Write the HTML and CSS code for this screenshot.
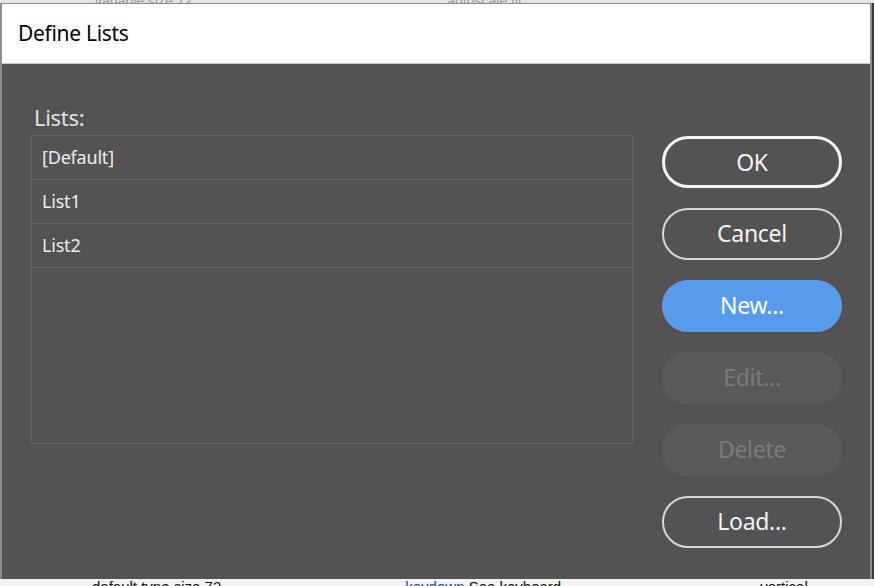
FILE: index.html
```
<!DOCTYPE html>
<html>
<head>
<meta charset="utf-8">
<link rel="stylesheet" href="styles.css">
</head>
<body>
<div class="page">
  <div class="bg-top"><span class="t1">variable size 72</span><span class="t2">autoscale fit</span></div>
  <div class="row">
    <div class="dialog">
      <div class="titlebar">Define Lists</div>
      <div class="content">
        <div class="left">
          <div class="label">Lists:</div>
          <div class="listbox">
            <div class="item">[Default]</div>
            <div class="item">List1</div>
            <div class="item">List2</div>
          </div>
        </div>
        <div class="buttons">
          <div class="btn primary">OK</div>
          <div class="btn">Cancel</div>
          <div class="btn blue">New...</div>
          <div class="btn disabled">Edit...</div>
          <div class="btn disabled">Delete</div>
          <div class="btn">Load...</div>
        </div>
      </div>
    </div>
    <div class="edge"></div>
  </div>
  <div class="bg-bottom"><span class="b1">default type size 72</span><span class="b2"><span class="link">keydown</span> See keyboard</span><span class="b3">vertical</span></div>
</div>
</body>
</html>
```
FILE: styles.css
```
html, body {
  margin: 0;
  padding: 0;
}
body {
  width: 874px;
  height: 586px;
  overflow: hidden;
  background: #ececec;
  font-family: "Noto Sans", "Open Sans", sans-serif;
}
.page {
  display: flex;
  flex-direction: column;
  width: 874px;
  height: 586px;
}
.bg-top {
  height: 3px;
  overflow: hidden;
  background: #e4e4e4;
  font-family: "Liberation Sans", sans-serif;
  font-size: 14px;
  color: #999;
  line-height: 3px;
  white-space: nowrap;
}
.bg-top .t1 { margin-left: 95px; }
.bg-top .t2 { margin-left: 255px; }
.row {
  display: flex;
  height: 576px;
}
.dialog {
  width: 868px;
  border-top: 1px solid #8c8c8c;
  border-left: 2px solid #8c8c8c;
  border-right: 2px solid #8c8c8c;
  display: flex;
  flex-direction: column;
  background: #535353;
}
.edge {
  width: 2px;
  background: #3a3a3a;
}
.titlebar {
  height: 59px;
  background: #ffffff;
  border-bottom: 1px solid #c8c8c8;
  color: #000;
  font-size: 21px;
  letter-spacing: -0.3px;
  line-height: 59px;
  padding-left: 16px;
}
.content {
  flex: 1;
  display: flex;
  padding: 39px 26px 0 29px;
}
.left {
  width: 602px;
  flex: none;
}
.label {
  color: #e2e2e2;
  font-size: 22px;
  letter-spacing: -0.3px;
  line-height: 28px;
  padding-left: 3px;
  height: 32px;
}
.listbox {
  height: 307px;
  border: 1px solid #636363;
  border-radius: 1px;
}
.item {
  height: 43px;
  border-bottom: 1px solid #636363;
  color: #ececec;
  font-size: 18px;
  letter-spacing: -0.2px;
  line-height: 43px;
  padding-left: 10px;
}
.buttons {
  flex: none;
  margin-left: 29px;
  padding-top: 33px;
  display: flex;
  flex-direction: column;
  gap: 20px;
}
.btn {
  width: 176px;
  height: 48px;
  border: 2px solid #d8d8d8;
  border-radius: 26px;
  color: #f2f2f2;
  font-size: 23px;
  letter-spacing: -0.3px;
  line-height: 46px;
  text-align: center;
}
.btn.primary {
  border: 3px solid #f4f4f4;
  width: 174px;
  height: 46px;
}
.btn.blue {
  background: #589bea;
  border-color: #589bea;
  color: #fff;
}
.btn.disabled {
  background: #5a5a5a;
  border-color: #5a5a5a;
  color: #7a7a7a;
}
.bg-bottom {
  height: 7px;
  overflow: hidden;
  background: #f2f2f2;
  font-family: "Liberation Sans", sans-serif;
  font-size: 15px;
  color: #111;
  line-height: 16px;
  white-space: nowrap;
}
.bg-bottom .b1 { margin-left: 92px; }
.bg-bottom .b2 { margin-left: 184px; }
.bg-bottom .b3 { margin-left: 199px; }
.bg-bottom .link { color: #1a4fa0; }
```
